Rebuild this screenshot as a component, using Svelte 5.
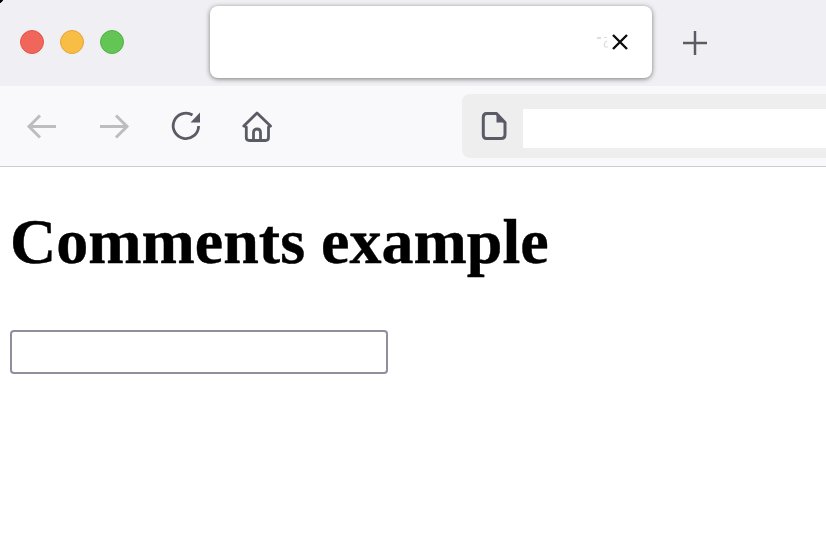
<script>
  const dots = ["red", "yellow", "green"];
</script>

<div class="tabbar">
  <div class="dots">
    {#each dots as dot}
      <span class="dot {dot}"></span>
    {/each}
  </div>
  <div class="tab">
    <svg width="12" height="14" viewBox="0 0 12 14">
      <path d="M0 3 H4" stroke="#c8c8c8" stroke-width="1.2" fill="none" />
      <path d="M7 2.5 H10" stroke="#dddddd" stroke-width="1" fill="none" />
      <path d="M10 6 Q6 8 8 12 H11" stroke="#dcdcdc" stroke-width="1.2" fill="none" />
    </svg>
    <svg class="close" width="18" height="18" viewBox="0 0 18 18">
      <path d="M2 2 L16 16 M16 2 L2 16" stroke="#0c0c0d" stroke-width="2.4" fill="none" />
    </svg>
  </div>
  <svg class="plus" width="26" height="26" viewBox="0 0 26 26">
    <path d="M1 13 H25 M13 1 V25" stroke="#5b5b66" stroke-width="2.5" fill="none" />
  </svg>
</div>

<div class="toolbar">
  <div class="navs">
    <svg width="32" height="32" viewBox="0 0 32 32">
      <path d="M30 16.5 H4 M14 5.5 L3 16.5 L14 27.5" stroke="#bdbdc1" stroke-width="3" fill="none" />
    </svg>
    <svg width="32" height="32" viewBox="0 0 32 32">
      <path d="M2 16.5 H28 M18 5.5 L29 16.5 L18 27.5" stroke="#bdbdc1" stroke-width="3" fill="none" />
    </svg>
    <svg width="32" height="32" viewBox="0 0 32 32">
      <path d="M22.5 5 A12.7 12.7 0 1 0 28.6 16" stroke="#5b5b66" stroke-width="2.8" fill="none" />
      <path d="M20.5 12.5 L30 2.5 V12.5 Z" fill="#5b5b66" />
    </svg>
    <svg width="32" height="32" viewBox="0 0 32 32">
      <path
        d="M15 3 L1.8 16 L4.3 17 V27.5 Q4.3 30.5 7.3 30.5 H23.5 Q26.5 30.5 26.5 27.5 V17 L28.5 16 Z M11.5 30.5 V22.5 Q11.5 19 15 19 Q18.5 19 18.5 22.5 V30.5"
        stroke="#5b5b66"
        stroke-width="2.8"
        stroke-linejoin="round"
        fill="none"
      />
    </svg>
  </div>
  <div class="urlbar">
    <svg width="26" height="28" viewBox="0 0 26 28">
      <path
        d="M5.5 1.5 H15.5 L24 10.5 V22.5 Q24 26.5 20 26.5 H5.5 Q2.3 26.5 2.3 22.5 V5.5 Q2.3 1.5 5.5 1.5 Z"
        stroke="#5b5b66"
        stroke-width="3"
        stroke-linejoin="round"
        fill="none"
      />
      <path d="M15.5 1.5 L24 10.5 H15.5 Z" fill="#5b5b66" />
    </svg>
    <div class="url"></div>
  </div>
</div>

<main>
  <h1>Comments example</h1>
  <input type="text" />
</main>

<style>
  :global(body) {
    margin: 0;
    background: #fff;
    overflow: hidden;
  }

  .tabbar {
    height: 86px;
    background: radial-gradient(circle at 0 0, #000 2.5px, transparent 3px), #f0f0f4;
    display: flex;
    align-items: flex-start;
  }

  .dots {
    display: flex;
    gap: 16px;
    padding: 30px 0 0 20px;
    box-sizing: border-box;
    flex: none;
    width: 210px;
  }

  .dot {
    width: 24px;
    height: 24px;
    border-radius: 50%;
    box-sizing: border-box;
    border: 1px solid;
  }
  .red {
    background: #f1665a;
    border-color: #e0574c;
  }
  .yellow {
    background: #f8bd45;
    border-color: #e3a53c;
  }
  .green {
    background: #62c554;
    border-color: #54b048;
  }

  .tab {
    width: 442px;
    height: 72px;
    margin-top: 6px;
    background: #fff;
    border-radius: 8px;
    box-shadow: 0 1px 5px rgba(0, 0, 0, 0.5);
    display: flex;
    align-items: center;
    justify-content: flex-end;
    gap: 2px;
    padding-right: 23px;
    box-sizing: border-box;
    flex: none;
  }

  .plus {
    margin: 30px 0 0 30px;
    flex: none;
  }

  .toolbar {
    height: 80px;
    background: #f9f9fb;
    border-bottom: 1px solid #ccc;
    display: flex;
    align-items: center;
    overflow: hidden;
  }

  .navs {
    display: flex;
    gap: 40px;
    width: 462px;
    padding-left: 26px;
    box-sizing: border-box;
    flex: none;
  }

  .urlbar {
    flex: none;
    width: 500px;
    height: 64px;
    background: #eeeeef;
    border-radius: 8px;
    display: flex;
    align-items: center;
    gap: 16px;
    padding-left: 19px;
    box-sizing: border-box;
  }

  .url {
    width: 400px;
    height: 39px;
    margin-top: 4px;
    background: #fff;
  }

  main {
    padding: 0 10px;
  }

  h1 {
    font-family: "Liberation Serif", serif;
    font-size: 64px;
    font-weight: bold;
    line-height: 74px;
    color: #000;
    -webkit-text-stroke: 0.4px #000;
    margin: 38px 0 51px;
  }

  input {
    display: block;
    width: 378px;
    height: 44px;
    box-sizing: border-box;
    border: 2px solid #8f8f9d;
    border-radius: 4px;
    background: #fff;
    padding: 0;
    margin: 0;
  }
</style>
